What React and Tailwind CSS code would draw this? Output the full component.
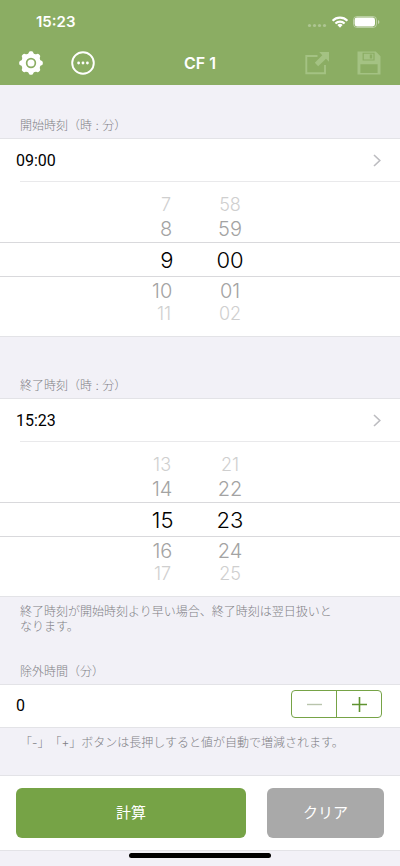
import React, { useState } from "react";

const GEAR_ANGLES = [0, 45, 90, 135, 180, 225, 270, 315];

const GearIcon = () => (
  <svg width="24" height="24" viewBox="0 0 24 24" aria-hidden="true">
    {GEAR_ANGLES.map((angle) => (
      <path
        key={angle}
        d="M8.4 4.4 L9.8 1.4 Q10.3 0.2 11.3 0.2 H12.7 Q13.7 0.2 14.2 1.4 L15.6 4.4 Z"
        fill="currentColor"
        transform={`rotate(${angle} 12 12)`}
      />
    ))}
    <circle cx="12" cy="12" r="7.5" fill="none" stroke="currentColor" strokeWidth="4.6" />
    <circle cx="12" cy="12" r="3.5" fill="currentColor" />
  </svg>
);

const MoreIcon = () => (
  <svg width="24" height="24" viewBox="0 0 24 24" aria-hidden="true">
    <circle cx="12" cy="12" r="10.8" fill="none" stroke="currentColor" strokeWidth="1.9" />
    <circle cx="7.6" cy="12" r="1.4" fill="currentColor" />
    <circle cx="12" cy="12" r="1.4" fill="currentColor" />
    <circle cx="16.4" cy="12" r="1.4" fill="currentColor" />
  </svg>
);

const ShareIcon = () => (
  <svg width="24" height="24" viewBox="0 0 24 24" aria-hidden="true">
    <path
      d="M12.5 5 H1.3 V22.2 H20 V14"
      fill="none"
      stroke="currentColor"
      strokeWidth="1.9"
    />
    <path
      d="M14.2 1 H24 V10.8 L21 7.8 L13.2 15.2 L9.8 11.8 L17.3 4.2 Z"
      fill="currentColor"
    />
  </svg>
);

const SaveIcon = () => (
  <svg width="24" height="24" viewBox="0 0 24 24" aria-hidden="true">
    <path
      fillRule="evenodd"
      fill="currentColor"
      d="M0.5 0.5 H18.8 L23.5 5.2 V23.5 H0.5 Z M5.6 1.8 V9.4 H17.6 V1.8 Z M3.4 13.2 V22 H20.6 V13.2 Z"
    />
    <path
      fillRule="evenodd"
      fill="currentColor"
      d="M6.8 2.8 H16.4 V8.4 H6.8 Z M12.8 3.4 V7.6 H15.2 V3.4 Z"
    />
  </svg>
);

const ChevronIcon = () => (
  <svg width="8" height="13" viewBox="0 0 8 13" aria-hidden="true">
    <path d="M1 1 L6.8 6.5 L1 12" fill="none" stroke="#bcbcc0" strokeWidth="1.6" />
  </svg>
);

const StatusBar = () => (
  <div className="flex items-center justify-between pt-3 pr-5 pl-9">
    <span className="text-[15px] leading-5 font-semibold">15:23</span>
    <div className="flex items-center gap-1">
      <svg width="20" height="12" viewBox="0 0 20 12" aria-hidden="true">
        <g fill="currentColor" opacity="0.3">
          <circle cx="2.5" cy="9.5" r="1.6" />
          <circle cx="7.5" cy="9.5" r="1.6" />
          <circle cx="12.5" cy="9.5" r="1.6" />
          <circle cx="17.5" cy="9.5" r="1.6" />
        </g>
      </svg>
      <svg width="18" height="12" viewBox="0 0 18 12" aria-hidden="true">
        <g fill="none" stroke="currentColor" strokeWidth="2.1">
          <path d="M1.6 4.7 A10.5 10.5 0 0 1 16.4 4.7" />
          <path d="M4.4 7.5 A6.5 6.5 0 0 1 13.6 7.5" />
        </g>
        <path d="M6.4 9.1 A3.7 3.7 0 0 1 11.6 9.1 L9 11.8 Z" fill="currentColor" />
      </svg>
      <svg width="27" height="12" viewBox="0 0 27 12" aria-hidden="true">
        <rect x="0.5" y="0.5" width="23" height="11" rx="3.4" fill="none" stroke="currentColor" opacity="0.4" />
        <rect x="1.6" y="1.6" width="20.4" height="8.8" rx="2.4" fill="currentColor" />
        <path d="M25 4 Q26.4 4.6 26.4 6 Q26.4 7.4 25 8 Z" fill="currentColor" opacity="0.5" />
      </svg>
    </div>
  </div>
);

const NavBar = () => (
  <div className="grid grid-cols-3 items-center px-[19px] pt-[19px] pb-[10px]">
    <div className="flex gap-7">
      <button aria-label="設定">
        <GearIcon />
      </button>
      <button aria-label="メニュー">
        <MoreIcon />
      </button>
    </div>
    <h1 className="text-center text-base leading-6 font-semibold">CF 1</h1>
    <div className="flex justify-end gap-7 text-[#a4c283]">
      <button aria-label="共有" disabled>
        <ShareIcon />
      </button>
      <button aria-label="保存" disabled>
        <SaveIcon />
      </button>
    </div>
  </div>
);

const SectionLabel = ({ children }) => (
  <h2 className="px-5 pb-1 text-xs leading-4 font-light text-[#808085]">{children}</h2>
);

const SectionNote = ({ children }) => (
  <p className="pr-14 pl-5 pt-[7px] text-xs leading-[15px] font-light text-[#808085] [text-spacing-trim:space-all]">
    {children}
  </p>
);

const WHEEL_ROWS = [
  "h-5 text-lg text-[#cfcfcf]",
  "h-[27px] text-xl text-[#a3a3a3]",
  "h-[35px] text-[22px] text-black border-y border-[#d9d9dc]",
  "h-[27px] text-xl text-[#a3a3a3]",
  "h-5 text-lg text-[#cfcfcf]",
];

const TimeWheel = ({ hours, minutes }) => (
  <div className="pt-[13px] pb-3 font-light">
    {WHEEL_ROWS.map((row, i) => (
      <div key={i} className={`flex items-center justify-center pr-[10px] ${row}`}>
        <span className="flex w-[70px] justify-center">
          <span className="w-[2ch] text-right leading-5">{hours[i]}</span>
        </span>
        <span className="w-[70px] text-center leading-5">{minutes[i]}</span>
      </div>
    ))}
  </div>
);

const TimeSection = ({ label, value, hours, minutes }) => (
  <section>
    <SectionLabel>{label}</SectionLabel>
    <div className="border-y border-[#e3e3e7] bg-white">
      <button className="flex h-[42px] w-full items-center justify-between pr-[19px] pl-4 font-[Roboto,sans-serif] text-base text-black">
        <span className="pt-0.5">{value}</span>
        <ChevronIcon />
      </button>
      <div className="ml-5 border-t border-[#e9e9eb]" />
      <TimeWheel hours={hours} minutes={minutes} />
    </div>
  </section>
);

const ExcludeSection = () => {
  const [minutes, setMinutes] = useState(0);

  return (
    <section>
      <SectionLabel>除外時間（分）</SectionLabel>
      <div className="flex items-start justify-between border-y border-[#e3e3e7] bg-white pt-[5px] pr-[18px] pb-[9px] pl-4">
        <output className="pt-1 font-[Roboto,sans-serif] text-base leading-6 text-black">
          {minutes}
        </output>
        <div className="flex h-7 w-[91px] divide-x divide-[#76a346] rounded border border-[#76a346]">
          <button
            aria-label="減らす"
            disabled={minutes === 0}
            onClick={() => setMinutes(minutes - 1)}
            className="flex flex-1 items-center justify-center text-[#76a346] disabled:text-[#b9c4ac]"
          >
            <svg width="15" height="15" viewBox="0 0 15 15" aria-hidden="true">
              <path d="M0 7.5 H15" stroke="currentColor" strokeWidth="1.4" />
            </svg>
          </button>
          <button
            aria-label="増やす"
            onClick={() => setMinutes(minutes + 1)}
            className="flex flex-1 items-center justify-center text-[#5f9330]"
          >
            <svg width="15" height="15" viewBox="0 0 15 15" aria-hidden="true">
              <path d="M0 7.5 H15 M7.5 0 V15" stroke="currentColor" strokeWidth="1.6" />
            </svg>
          </button>
        </div>
      </div>
      <SectionNote>「-」「+」ボタンは長押しすると値が自動で増減されます。</SectionNote>
    </section>
  );
};

const App = () => {
  return (
    <div className="flex min-h-screen flex-col bg-[#f2f1f7] font-[Inter,'Noto_Sans_CJK_JP',sans-serif]">
      <header className="bg-[#8bad63] text-white">
        <StatusBar />
        <NavBar />
      </header>

      <main className="flex-1">
        <div className="pt-[33px]">
          <TimeSection
            label="開始時刻（時 : 分）"
            value="09:00"
            hours={["7", "8", "9", "10", "11"]}
            minutes={["58", "59", "00", "01", "02"]}
          />
        </div>
        <div className="pt-[41px]">
          <TimeSection
            label="終了時刻（時 : 分）"
            value="15:23"
            hours={["13", "14", "15", "16", "17"]}
            minutes={["21", "22", "23", "24", "25"]}
          />
          <SectionNote>
            終了時刻が開始時刻より早い場合、終了時刻は翌日扱いと
            <br />
            なります。
          </SectionNote>
        </div>
        <div className="pt-[30px]">
          <ExcludeSection />
        </div>
      </main>

      <div className="flex gap-[21px] border-y border-[#e3e3e7] bg-white px-4 py-3 text-[15px] text-white">
        <button className="h-[50px] flex-1 rounded-md bg-[#76a346]">計算</button>
        <button className="h-[50px] w-[117px] rounded-md bg-[#a9a9a9]">クリア</button>
      </div>
      <div className="flex h-[15px] justify-center pt-0.5">
        <div className="h-[5px] w-[142px] rounded-full bg-black" />
      </div>
    </div>
  );
};

export default App;
